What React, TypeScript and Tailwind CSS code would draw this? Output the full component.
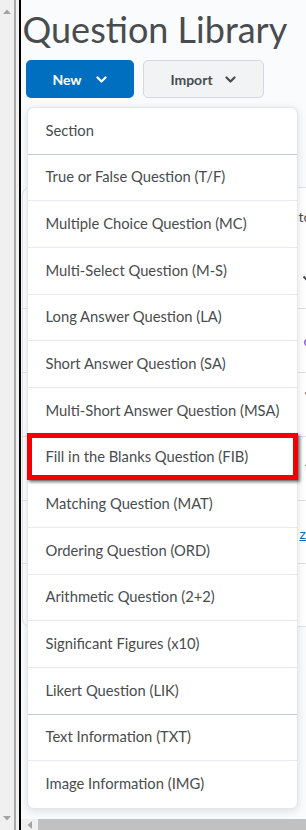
import React from "react";

const items: { label: string; strong?: boolean }[] = [
  { label: "Section", strong: true },
  { label: "True or False Question (T/F)" },
  { label: "Multiple Choice Question (MC)" },
  { label: "Multi-Select Question (M-S)" },
  { label: "Long Answer Question (LA)" },
  { label: "Short Answer Question (SA)" },
  { label: "Multi-Short Answer Question (MSA)" },
  { label: "Fill in the Blanks Question (FIB)" },
  { label: "Matching Question (MAT)" },
  { label: "Ordering Question (ORD)" },
  { label: "Arithmetic Question (2+2)" },
  { label: "Significant Figures (x10)" },
  { label: "Likert Question (LIK)", strong: true },
  { label: "Text Information (TXT)" },
  { label: "Image Information (IMG)" },
];

function Chevron({ color }: { color: string }) {
  return (
    <svg width="11" height="7" viewBox="0 0 11 7" fill="none">
      <path d="M1.5 1.5l4 4 4-4" stroke={color} strokeWidth="2.2" strokeLinecap="round" strokeLinejoin="round" />
    </svg>
  );
}

export default function App() {
  return (
    <div className="flex h-[830px] w-[306px] overflow-hidden bg-[#fafbfc] font-['Lato','Noto_Sans',sans-serif]">
      {/* vertical scrollbar */}
      <div className="flex w-[14px] shrink-0 flex-col items-center justify-between bg-[#f0f0f0] py-[9px]">
        <svg width="8" height="5" viewBox="0 0 8 5">
          <path d="M0 5L4 0.5 8 5z" fill="#a3a3a3" />
        </svg>
        <svg width="8" height="5" viewBox="0 0 8 5">
          <path d="M0 0L4 4.5 8 0z" fill="#a3a3a3" />
        </svg>
      </div>
      <div className="w-[1.5px] shrink-0 bg-[#a8a8a8]" />
      <div className="w-[3.5px] shrink-0 bg-[#f2f2f2]" />
      <div className="w-[1.5px] shrink-0 bg-black" />

      <div className="flex min-w-0 flex-1 flex-col">
        <div className="relative flex-1 overflow-hidden bg-[#fafbfc] pl-[5px]">
          <h1 className="ml-[-3px] mt-[11px] whitespace-nowrap text-[36px] leading-[36px] font-normal text-[#494c4e]">
            Question Library
          </h1>
          <div className="mt-[13px] flex gap-[9px]">
            <button className="flex h-[38px] w-[108px] items-center justify-center gap-[14px] rounded-[5px] bg-[#006fbf] text-[14px] font-bold text-white">
              <span>New</span>
              <Chevron color="#ffffff" />
            </button>
            <button className="flex h-[38px] w-[121px] items-center justify-center gap-[12px] rounded-[5px] border border-[#d3d9e3] bg-[#f1f3f5] text-[14px] font-bold text-[#494c4e]">
              <span>Import</span>
              <Chevron color="#494c4e" />
            </button>
          </div>

          {/* table card behind the menu */}
          <div className="ml-[-4px] mt-[89px] w-[330px] rounded-[8px] border border-[#dfe3e8] bg-white text-[14px] text-[#494c4e]">
            <div className="relative h-[121px] border-b border-[#dfe3e8]">
              <span className="absolute left-[276px] top-[18px]">to</span>
              <svg className="absolute left-[279px] top-[87px]" width="11" height="7" viewBox="0 0 11 7" fill="none">
                <path d="M1.5 1.5l4 4 4-4" stroke="#494c4e" strokeWidth="2" />
              </svg>
            </div>
            <div className="relative h-[64px] border-b border-[#dfe3e8]">
              <span className="absolute left-[281px] top-[21px] text-[#6e4fc9]">c</span>
            </div>
            <div className="relative h-[64px] border-b border-[#dfe3e8]">
              <span className="absolute left-[282px] top-[15px] text-[10px]">'</span>
            </div>
            <div className="relative h-[64px] border-b border-[#dfe3e8]">
              <span className="absolute left-[282px] top-[18px] text-[10px]">.</span>
            </div>
            <div className="relative h-[63px] border-b border-[#dfe3e8]">
              <span className="absolute left-[277px] top-[22px] text-[#006fbf] underline">z</span>
            </div>
            <div className="h-[62px]" />
          </div>

          {/* dropdown menu */}
          <div className="absolute left-[6px] top-[107px] w-[271px] rounded-[7px] border border-[#e3e7ec] bg-white shadow-[0_2px_8px_rgba(0,0,0,0.12)]">
            {items.map((it, i) => (
              <div
                key={it.label}
                className={
                  "flex h-[46.67px] items-center pb-[2px] pl-[18px] text-[14.75px] text-[#494c4e] " +
                  (i === items.length - 1
                    ? ""
                    : it.strong
                    ? "border-b border-[#c3c8cf]"
                    : "border-b border-[#e6e9ee]")
                }
              >
                {it.label}
              </div>
            ))}
            <div className="absolute left-[-1px] top-[325px] h-[47px] w-[271px] border-[5px] border-[#f00000] shadow-[2px_2px_3px_rgba(0,0,0,0.55)]" />
          </div>
        </div>

        {/* horizontal scrollbar */}
        <div className="flex h-[11px] shrink-0 bg-[#f0f0f0]">
          <div className="flex w-[17px] items-center justify-center">
            <svg width="5" height="8" viewBox="0 0 5 8">
              <path d="M5 0L0.5 4 5 8z" fill="#a3a3a3" />
            </svg>
          </div>
          <div className="flex-1 bg-[#c1c1c1]" />
        </div>
      </div>
    </div>
  );
}
